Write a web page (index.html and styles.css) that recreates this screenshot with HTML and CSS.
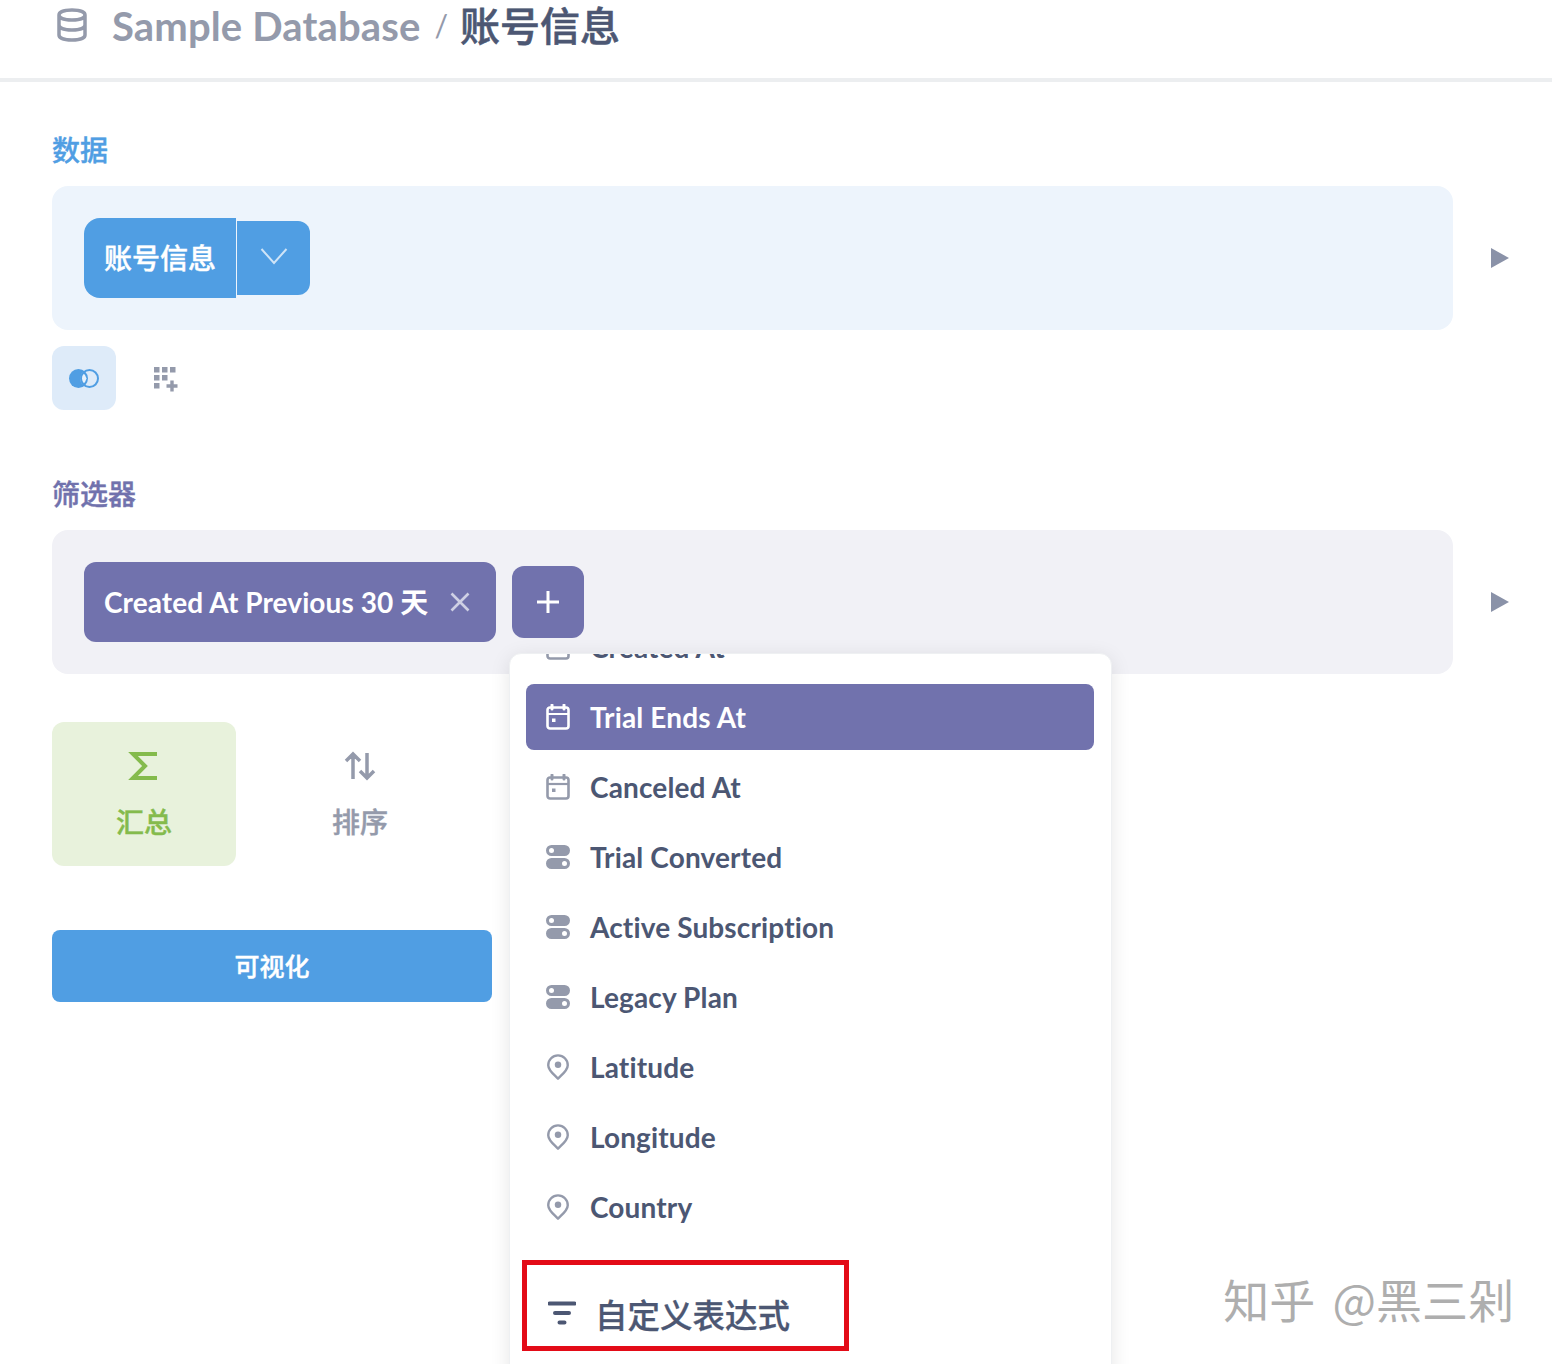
FILE: index.html
```html
<!DOCTYPE html>
<html lang="zh-CN">
<head>
<meta charset="utf-8">
<title>账号信息</title>
<link rel="stylesheet" href="styles.css">
</head>
<body>
<svg class="defs" width="0" height="0" aria-hidden="true">
  <symbol id="cal" viewBox="0 0 24 26">
    <path d="M6 1v4M18 1v4" fill="none" stroke="currentColor" stroke-width="3" stroke-linecap="round"/>
    <rect x="1.500" y="3.500" width="21" height="21" rx="2.500" fill="none" stroke="currentColor" stroke-width="2.600"/>
    <path d="M2 10h20" stroke="currentColor" stroke-width="2.200"/>
    <rect x="6" y="14.500" width="3.500" height="3.500" fill="currentColor"/>
  </symbol>
  <symbol id="toggle" viewBox="0 0 24 24">
    <path fill-rule="evenodd" fill="currentColor" d="M5.500 0h13a5.500 5.500 0 0 1 0 11h-13a5.500 5.500 0 0 1 0-11zM5.500 3a2.500 2.500 0 1 0 0 5 2.500 2.500 0 0 0 0-5z"/>
    <path fill-rule="evenodd" fill="currentColor" d="M5.500 13h13a5.500 5.500 0 0 1 0 11h-13a5.500 5.500 0 0 1 0-11zM18.500 16a2.500 2.500 0 1 0 0 5 2.500 2.500 0 0 0 0-5z"/>
  </symbol>
  <symbol id="pin" viewBox="0 0 24 28">
    <path d="M12 26.500C7 21.500 1.500 17.500 1.500 12a10.500 10.500 0 0 1 21 0c0 5.500-5.500 9.500-10.500 14.500z" fill="none" stroke="currentColor" stroke-width="2.600" stroke-linejoin="round"/>
    <circle cx="12" cy="11.500" r="3.500" fill="currentColor"/>
  </symbol>
  <symbol id="tri" viewBox="0 0 18 20"><path d="M0 0l18 10L0 20z" fill="currentColor"/></symbol>
</svg>

<header class="topbar">
  <svg class="db-icon" viewBox="0 0 30 34" aria-hidden="true">
    <path d="M2 7c0-3 5-5 13-5s13 2 13 5v20c0 3-5 5-13 5S2 30 2 27z M2 7c0 3 5 5 13 5s13-2 13-5 M2 17c0 3 5 5 13 5s13-2 13-5" fill="none" stroke="currentColor" stroke-width="3.500"/>
  </svg>
  <span class="crumb">Sample Database</span>
  <span class="slash">/</span>
  <span class="crumb-now">账号信息</span>
</header>

<main class="editor">
  <h2 class="label label-blue">数据</h2>
  <div class="step">
    <div class="box box-blue">
      <span class="chip chip-blue">账号信息</span>
      <span class="chevron-btn">
        <svg class="chevron" viewBox="0 0 28 18" aria-hidden="true"><path d="M1.500 2L14 16 26.500 2" fill="none" stroke="currentColor" stroke-width="2"/></svg>
      </span>
    </div>
    <svg class="play"><use href="#tri"/></svg>
  </div>
  <div class="tools">
    <span class="tool tool-on">
      <svg class="join" viewBox="0 0 30 19" aria-hidden="true">
        <circle cx="9.500" cy="9.500" r="9.500" fill="currentColor"/>
        <path d="M13.500 3.500A9.500 9.500 0 0 0 13.500 15.500 9.500 9.500 0 0 0 17.500 9.500 9.500 9.500 0 0 0 13.500 3.500z" fill="#e9f2fb"/>
        <circle cx="20.500" cy="9.500" r="8.500" fill="none" stroke="currentColor" stroke-width="2"/>
      </svg>
    </span>
    <span class="tool tool-add">
      <svg class="grid-plus" viewBox="0 0 24 26" aria-hidden="true">
        <path fill="currentColor" d="M0 0h5.500v5.500H0zM8 0h5.500v5.500H8zM16 0h5.500v5.500H16zM0 8h5.500v5.500H0zM8 8h5.500v5.500H8zM0 16h5.500v5.500H0z"/>
        <path d="M18 13.500v11M12.500 19h11" stroke="currentColor" stroke-width="3.400"/>
      </svg>
    </span>
  </div>

  <h2 class="label label-purple label-second">筛选器</h2>
  <div class="step">
    <div class="box box-grey">
      <span class="chip chip-purple">Created At Previous 30 天
        <svg class="close" viewBox="0 0 20 20" aria-hidden="true"><path d="M1.500 1.500l17 17M18.500 1.500l-17 17" stroke="currentColor" stroke-width="2.600"/></svg>
      </span>
      <span class="plus-btn">
        <svg class="plus" viewBox="0 0 24 24" aria-hidden="true"><path d="M12 1v22M1 12h22" stroke="currentColor" stroke-width="3"/></svg>
      </span>
    </div>
    <svg class="play"><use href="#tri"/></svg>
  </div>

  <div class="tiles">
    <div class="tile tile-on">
      <svg class="tile-icon" viewBox="0 0 28 30" aria-hidden="true"><path d="M27 3H3l12 12L3 27h24" fill="none" stroke="currentColor" stroke-width="4"/></svg>
      <span>汇总</span>
    </div>
    <div class="tile">
      <svg class="tile-icon" viewBox="0 0 32 30" aria-hidden="true"><path d="M9 28V3M2 10l7-7 7 7M23 2v25M16 20l7 7 7-7" fill="none" stroke="currentColor" stroke-width="3.500"/></svg>
      <span>排序</span>
    </div>
  </div>

  <button class="visualize" type="button">可视化</button>
</main>

<section class="menu">
  <ul class="menu-list">
    <li class="row"><svg class="row-icon"><use href="#cal"/></svg>Created At</li>
    <li class="row row-on"><svg class="row-icon"><use href="#cal"/></svg>Trial Ends At</li>
    <li class="row"><svg class="row-icon"><use href="#cal"/></svg>Canceled At</li>
    <li class="row"><svg class="row-icon"><use href="#toggle"/></svg>Trial Converted</li>
    <li class="row"><svg class="row-icon"><use href="#toggle"/></svg>Active Subscription</li>
    <li class="row"><svg class="row-icon"><use href="#toggle"/></svg>Legacy Plan</li>
    <li class="row"><svg class="row-icon"><use href="#pin"/></svg>Latitude</li>
    <li class="row"><svg class="row-icon"><use href="#pin"/></svg>Longitude</li>
    <li class="row"><svg class="row-icon"><use href="#pin"/></svg>Country</li>
  </ul>
  <div class="custom">
    <svg class="filter-icon" viewBox="0 0 28 24" aria-hidden="true"><path d="M1.500 2.500h25M7 12h14M11.500 21.500h5" stroke="currentColor" stroke-width="4" stroke-linecap="round"/></svg>
    <span>自定义表达式</span>
  </div>
</section>

<div class="watermark">知乎 @黑三剁</div>
</body>
</html>
```

FILE: styles.css
```css
* { box-sizing: border-box; }
html, body { margin: 0; padding: 0; }
body {
  position: relative;
  width: 1552px;
  height: 1364px;
  overflow: hidden;
  background: #fff;
  font-family: Lato, "Noto Sans CJK SC", sans-serif;
  color: #4c5773;
}
.defs { position: absolute; }

.topbar {
  height: 82px;
  padding: 0 0 28px 57px;
  border-bottom: 4px solid #eceef0;
  display: flex;
  align-items: center;
  font-size: 40px;
  font-weight: 700;
}
.db-icon { width: 30px; height: 34px; color: #949aab; margin-right: 25px; }
.crumb { color: #949aab; letter-spacing: .14px; padding-top: 2px; }
.slash { color: #949aab; font-size: 30px; font-weight: 400; margin: 0 12px 0 14px; }
.crumb-now { color: #4c5773; padding-bottom: 2px; font-weight: 500; -webkit-text-stroke: .6px #4c5773; }

.editor { padding: 48px 0 0 52px; }
.label {
  margin: 0 0 16px;
  height: 40px;
  line-height: 40px;
  font-size: 28px;
  font-weight: 500;
  -webkit-text-stroke: .4px currentColor;
}
.label-blue { color: #509ee3; }
.label-purple { color: #7172ad; }
.label-second { margin-top: 64px; }

.step { display: flex; align-items: center; }
.box {
  width: 1401px;
  height: 144px;
  padding: 32px;
  border-radius: 16px;
  display: flex;
  align-items: center;
}
.box-blue { background: #edf4fc; }
.box-grey { background: #f1f1f6; }
.play { width: 18px; height: 20px; margin-left: 38px; color: #8a92a8; }

.chip {
  height: 80px;
  display: inline-flex;
  align-items: center;
  padding: 0 20px 3px;
  color: #fff;
  font-size: 28px;
  font-weight: 700;
  white-space: nowrap;
}
.chip-blue { width: 152px; background: #509ee3; border-radius: 16px 0 0 16px; font-weight: 500; -webkit-text-stroke: .4px #fff; }
.chevron-btn {
  width: 73px;
  height: 74px;
  margin-left: 1px;
  background: #509ee3;
  border-radius: 0 12px 12px 0;
  display: flex;
  align-items: center;
  justify-content: center;
  color: #cfe4f7;
}
.chevron { width: 28px; height: 18px; margin-top: -4px; }
.chip-purple { width: 412px; background: #7172ad; border-radius: 12px; justify-content: space-between; padding-right: 26px; letter-spacing: .09px; }
.close { width: 20px; height: 20px; color: #cfd0e4; margin-top: 3px; }
.plus-btn {
  width: 72px;
  height: 72px;
  margin-left: 16px;
  background: #7172ad;
  border-radius: 12px;
  color: #fff;
  display: flex;
  align-items: center;
  justify-content: center;
}
.plus { width: 24px; height: 24px; }

.tools { display: flex; margin-top: 16px; }
.tool {
  width: 64px;
  height: 64px;
  border-radius: 12px;
  margin-right: 16px;
  display: flex;
  align-items: center;
  justify-content: center;
  color: #949aab;
}
.tool-on { background: #deebf9; color: #509ee3; }
.tool-add { padding-left: 3px; }
.join { width: 30px; height: 19px; }
.grid-plus { width: 24px; height: 26px; margin-top: 3px; }

.tiles { display: flex; gap: 32px; margin-top: 48px; }
.tile {
  width: 184px;
  height: 144px;
  border-radius: 12px;
  display: flex;
  flex-direction: column;
  align-items: center;
  padding-top: 29px;
  color: #949aab;
  font-size: 28px;
  font-weight: 500;
}
.tile span { line-height: 40px; margin-top: 21px; -webkit-text-stroke: .4px currentColor; }
.tile-on { background: #e8f2dc; color: #84bb4c; }
.tile-icon { width: 32px; height: 30px; }

.visualize {
  display: block;
  width: 440px;
  height: 72px;
  margin-top: 64px;
  padding-bottom: 4px;
  border: 0;
  border-radius: 8px;
  background: #509ee3;
  color: #fff;
  font: 500 25px Lato, "Noto Sans CJK SC", sans-serif;
  -webkit-text-stroke: .4px #fff;
}

.menu {
  position: absolute;
  left: 509px;
  top: 653px;
  width: 603px;
  height: 740px;
  background: #fff;
  border: 1px solid #eef0f2;
  border-radius: 12px;
  box-shadow: 0 4px 20px rgba(0, 0, 0, .1);
  overflow: hidden;
}
.menu-list {
  list-style: none;
  margin: -40px 0 0;
  padding: 0 17px 0 16px;
}
.row {
  height: 66px;
  margin-bottom: 4px;
  padding-left: 20px;
  border-radius: 8px;
  display: flex;
  align-items: center;
  font-size: 28px;
  font-weight: 700;
  letter-spacing: .14px;
  white-space: nowrap;
}
.row-icon { width: 24px; height: 26px; margin-right: 20px; color: #949aab; flex: none; }
.row-on { background: #7172ad; color: #fff; }
.row-on .row-icon { color: #fff; }

.custom {
  width: 327px;
  height: 91px;
  margin: 20px 0 0 12px;
  padding: 15px 0 0 21px;
  border: 5px solid #e30b17;
  display: flex;
  align-items: center;
  font-size: 32.500px;
  font-weight: 500;
  font-family: "Noto Sans CJK SC", sans-serif;
  -webkit-text-stroke: .3px #4c5773;
}
.filter-icon { width: 28px; height: 24px; margin-right: 19px; }

.watermark {
  position: absolute;
  right: 38px;
  top: 1265px;
  font-family: "Noto Sans CJK SC", sans-serif;
  font-size: 46px;
  line-height: 66px;
  word-spacing: 7px;
  color: #aeaeae;
  white-space: nowrap;
}
```
